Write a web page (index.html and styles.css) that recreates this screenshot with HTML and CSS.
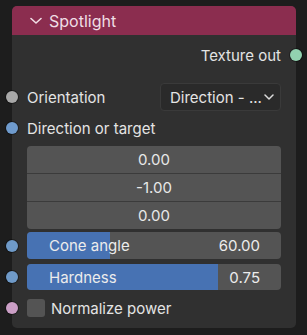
FILE: index.html
```html
<!DOCTYPE html>
<html>
<head>
<meta charset="utf-8">
<link rel="stylesheet" href="styles.css">
</head>
<body>
<div class="node">
  <div class="header">
    <svg class="chev" width="12" height="8" viewBox="0 0 12 8"><path d="M1 1.5 L6 6 L11 1.5" fill="none" stroke="#f0dde5" stroke-width="1.6" stroke-linecap="round" stroke-linejoin="round"/></svg>
    <span class="title">Spotlight</span>
  </div>
  <div class="body">
    <div class="row out">
      <span>Texture out</span>
      <i class="sock s-green sock-r"></i>
    </div>
    <div class="row orient">
      <i class="sock s-grey"></i>
      <span>Orientation</span>
      <div class="dropdown">
        <span>Direction - ...</span>
        <svg width="10" height="6" viewBox="0 0 10 6"><path d="M1 1 L5 5 L9 1" fill="none" stroke="#dcdcdc" stroke-width="1.5" stroke-linecap="round" stroke-linejoin="round"/></svg>
      </div>
    </div>
    <div class="row dir">
      <i class="sock s-blue"></i>
      <span>Direction or target</span>
    </div>
    <div class="vector">
      <div class="vrow">0.00</div>
      <div class="vrow">-1.00</div>
      <div class="vrow">0.00</div>
    </div>
    <div class="row slrow cone">
      <i class="sock s-blue2"></i>
      <div class="slider">
        <div class="fill" style="width:32.7%"></div>
        <span class="lbl">Cone angle</span>
        <span class="val">60.00</span>
      </div>
    </div>
    <div class="row slrow hard">
      <i class="sock s-blue2"></i>
      <div class="slider">
        <div class="fill" style="width:75%"></div>
        <span class="lbl">Hardness</span>
        <span class="val">0.75</span>
      </div>
    </div>
    <div class="row norm">
      <i class="sock s-pink"></i>
      <div class="check"></div>
      <span>Normalize power</span>
    </div>
  </div>
</div>
</body>
</html>
```
FILE: styles.css
```css
html, body {
  margin: 0;
  padding: 0;
  background: #1d1d1d;
  width: 307px;
  height: 335px;
  overflow: hidden;
  font-family: Inter, "DejaVu Sans", sans-serif;
  font-size: 15px;
  color: #e4e4e4;
}
.node {
  margin: 6px 0 0 12px;
  width: 284px;
  height: 322px;
  background: #303030;
  border-radius: 5px;
  box-sizing: border-box;
}
.header {
  height: 29px;
  background: #8b2d4f;
  border-radius: 5px 5px 0 0;
  display: flex;
  align-items: center;
  padding-left: 18px;
  gap: 7px;
}
.chev { display: block; margin-top: 1px; }
.title {
  font-size: 16px;
  color: #efdee5;
}
.body {
  padding: 7px 15px 0 15px;
  display: flex;
  flex-direction: column;
}
.row {
  position: relative;
  display: flex;
  align-items: center;
}
.sock {
  position: absolute;
  left: -21px;
  top: 50%;
  width: 12px;
  height: 12px;
  margin-top: -6px;
  border-radius: 50%;
  box-shadow: 0 0 0 1px rgba(0,0,0,0.35);
}
.sock-r { left: auto; right: -21px; }
.s-green { background: #92d2b0; }
.s-grey { background: #a8a8a8; }
.s-blue { background: #6f9bcd; }
.s-blue2 { background: #6f9ac8; }
.s-pink { background: #cb9fc6; }
.out {
  height: 26px;
  justify-content: flex-end;
}
.orient {
  height: 28px;
  margin-top: 15px;
  justify-content: space-between;
}
.dropdown {
  width: 121px;
  height: 28px;
  box-sizing: border-box;
  background: #2a2a2a;
  border: 1px solid #3a3a3a;
  border-radius: 4px;
  display: flex;
  align-items: center;
  justify-content: space-between;
  padding: 0 6px 0 9px;
  white-space: nowrap;
}
.dropdown svg { display: block; flex: none; }
.dir {
  height: 26px;
  margin-top: 4px;
}
.vector {
  margin-top: 5px;
  height: 83px;
  background: #545454;
  border-radius: 4px;
  display: flex;
  flex-direction: column;
  overflow: hidden;
}
.vrow {
  flex: 1;
  display: flex;
  align-items: center;
  justify-content: center;
  color: #e8e8e8;
}
.vrow + .vrow { border-top: 1px solid #3b3b3b; }
.slrow { height: 27px; }
.cone { margin-top: 3px; }
.hard { margin-top: 5px; height: 26px; }
.slider {
  position: relative;
  flex: 1;
  height: 100%;
  background: #545454;
  border-radius: 4px;
  overflow: hidden;
  display: flex;
  align-items: center;
  justify-content: space-between;
  padding: 0 21px 0 22px;
}
.fill {
  position: absolute;
  left: 0; top: 0; bottom: 0;
  background: #4772b3;
}
.lbl, .val { position: relative; color: #ececec; }
.norm {
  height: 26px;
  margin-top: 5px;
  gap: 6px;
}
.check {
  width: 18px;
  height: 18px;
  background: #545454;
  border-radius: 3px;
}
```
